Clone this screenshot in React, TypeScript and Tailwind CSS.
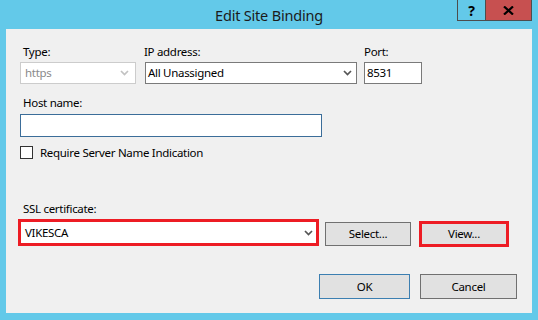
import React from "react";

const Chevron = ({ color }: { color: string }) => (
   <svg width="9" height="6" viewBox="0 0 9 6" className="shrink-0">
      <path d="M1 1 L4.5 4.5 L8 1" fill="none" stroke={color} strokeWidth="1.7" />
   </svg>
)

const Label = ({ text, className }: { text: string, className?: string }) => (
   <div className={`h-[16px] leading-[16px] text-[11.5px] tracking-[-0.3px] text-black ${className ?? ''}`}>{text}</div>
)

const Button = ({ text, className }: { text: string, className: string }) => (
   <div className={`flex items-center justify-center bg-[#e1e1e1] text-[11.5px] tracking-[-0.3px] text-black ${className}`}>{text}</div>
)

const EditSiteBinding = () => (
   <div className="w-[538px] h-[320px] bg-[#63c9e9] flex flex-col font-['Segoe_UI','Noto_Sans',sans-serif] overflow-hidden">
      {/* title bar */}
      <div className="h-[29px] grid grid-cols-[1fr_auto_1fr] shrink-0">
         <div />
         <div className="text-[14.5px] tracking-[-0.2px] leading-[29px] text-[#1b1b1b] pt-[1px]">Edit Site Binding</div>
         <div className="flex justify-end items-start pr-[6px]">
            <div className="flex h-[21px] border border-[#4d4d4d] border-t-0">
               <div className="w-[27px] flex items-center justify-center text-[14px] font-bold text-black">?</div>
               <div className="w-[46px] bg-[#c75050] border-l border-[#4d4d4d] flex items-center justify-center">
                  <svg width="11" height="9" viewBox="0 0 11 9">
                     <path d="M1 0.5 L10 8.5 M10 0.5 L1 8.5" stroke="#000" strokeWidth="2.2" />
                  </svg>
               </div>
            </div>
         </div>
      </div>

      {/* body */}
      <div className="flex-1 mx-[6px] mb-[7px] bg-[#f0f0f0] flex flex-col pl-[14px] pt-[15px] text-[11.5px] tracking-[-0.3px]">
         <div className="flex">
            <div className="flex flex-col w-[116px]">
               <Label text="Type:" className="pl-[3px] mb-[2px]" />
               <div className="h-[22px] bg-white border border-[#cccccc] flex items-center justify-between pl-[4px] pr-[6px] text-[#8a8a8a]">
                  <span>https</span>
                  <Chevron color="#c2c2c2" />
               </div>
            </div>
            <div className="flex flex-col w-[212px] ml-[9px]">
               <Label text="IP address:" className="-ml-[1px] mb-[2px]" />
               <div className="h-[22px] bg-white border border-[#7a7a7a] flex items-center justify-between pl-[2px] pr-[4px] text-black">
                  <span>All Unassigned</span>
                  <Chevron color="#555555" />
               </div>
            </div>
            <div className="flex flex-col w-[58px] ml-[7px]">
               <Label text="Port:" className="mb-[2px]" />
               <div className="h-[22px] bg-white border border-[#7a7a7a] flex items-center pl-[2px] text-black">8531</div>
            </div>
         </div>

         <Label text="Host name:" className="pl-[3px] mt-[11px] mb-[3px]" />
         <div className="w-[302px] h-[23px] bg-white border border-[#3b6d99]" />

         <div className="flex items-center mt-[9px] h-[13px]">
            <div className="w-[13px] h-[13px] bg-white border border-[#333333]" />
            <span className="ml-[7px] leading-[16px] text-black">Require Server Name Indication</span>
         </div>

         <Label text="SSL certificate:" className="pl-[3px] mt-[42px] mb-[2px]" />
         <div className="flex items-start">
            <div className="-ml-[2px] w-[301px] h-[27px] bg-white border-[3px] border-[#ed1c24] flex items-center justify-between pl-[4px] pr-[3px] text-black">
               <span>VIKESCA</span>
               <Chevron color="#555555" />
            </div>
            <Button text="Select..." className="ml-[6px] mt-[3px] w-[86px] h-[24px] border border-[#707070]" />
            <Button text="View..." className="ml-[8px] mt-[2px] w-[90px] h-[26px] border-[3px] border-[#ed1c24]" />
         </div>

         <div className="flex justify-end pr-[15px] mt-[27px]">
            <Button text="OK" className="w-[91px] h-[25px] border border-[#3c7fb1]" />
            <Button text="Cancel" className="ml-[10px] w-[97px] h-[25px] border border-[#707070]" />
         </div>
      </div>
   </div>
)

export default function App() {
   return <EditSiteBinding />;
}
